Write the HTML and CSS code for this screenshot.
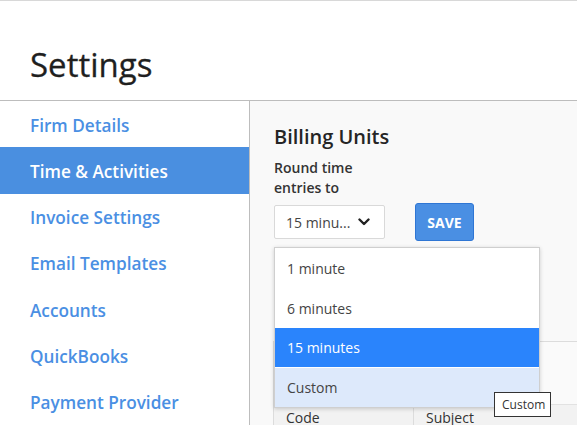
FILE: index.html
```html
<!DOCTYPE html>
<html lang="en">
<head>
<meta charset="utf-8">
<title>Settings</title>
<link rel="stylesheet" href="styles.css">
</head>
<body>
  <header class="page-header">
    <h1 class="page-title">Settings</h1>
  </header>
  <div class="layout">
    <nav class="sidebar">
      <a class="nav-item" href="#">Firm Details</a>
      <a class="nav-item is-active" href="#">Time &amp; Activities</a>
      <a class="nav-item" href="#">Invoice Settings</a>
      <a class="nav-item" href="#">Email Templates</a>
      <a class="nav-item" href="#">Accounts</a>
      <a class="nav-item" href="#">QuickBooks</a>
      <a class="nav-item" href="#">Payment Provider</a>
    </nav>
    <main class="content">
      <section class="billing">
        <h2 class="section-title">Billing Units</h2>
        <label class="field-label">Round time<br>entries to</label>
        <div class="field-row">
          <div class="select-wrap">
            <div class="select">
              <span class="select-value">15 minu...</span>
              <svg class="chevron" width="12" height="8" viewBox="0 0 12 8"><path d="M1.5 1.5 L6 6 L10.5 1.5" fill="none" stroke="#222" stroke-width="2.4" stroke-linecap="round" stroke-linejoin="round"/></svg>
            </div>
            <ul class="menu">
              <li class="menu-item">1 minute</li>
              <li class="menu-item">6 minutes</li>
              <li class="menu-item is-selected">15 minutes</li>
              <li class="menu-item is-hover">Custom</li>
            </ul>
          </div>
          <button class="btn-save" type="button">SAVE</button>
        </div>
      </section>
      <section class="table-card">
        <div class="table-head">
          <div class="th th-code">Code</div>
          <div class="th th-subject">Subject</div>
        </div>
      </section>
      <div class="tooltip">Custom</div>
    </main>
  </div>
</body>
</html>
```
FILE: styles.css
```css
* { box-sizing: border-box; }

html, body {
  margin: 0;
  padding: 0;
  height: 100%;
  overflow: hidden;
}

body {
  font-family: "Segoe UI", "Open Sans", sans-serif;
  color: #252525;
  background: #fff;
  border-top: 1px solid #d8d8d8;
}

.page-header {
  height: 99px;
  padding: 41px 30px 0;
}

.page-title {
  margin: 0;
  font-size: 33px;
  font-weight: 400;
  line-height: 46px;
  color: #1f1f1f;
  -webkit-text-stroke: 0.3px #1f1f1f;
}

.layout {
  display: flex;
  border-top: 1px solid #bdbdbd;
  height: calc(100% - 99px);
}

.sidebar {
  width: 250px;
  flex: none;
  border-right: 1px solid #bdbdbd;
  display: flex;
  flex-direction: column;
}

.nav-item {
  display: flex;
  align-items: center;
  height: 46.5px;
  padding: 2px 0 0 30px;
  font-size: 17.2px;
  font-weight: 600;
  color: #4a8fe3;
  text-decoration: none;
}

.nav-item.is-active {
  background: #4a8fe0;
  color: #fff;
}

.content {
  position: relative;
  flex: 1;
  background: #f9f9f9;
  padding: 22px 0 0 24px;
}

.section-title {
  margin: 0;
  font-size: 20px;
  font-weight: 600;
  line-height: 28px;
  color: #252525;
}

.field-label {
  display: block;
  margin-top: 7px;
  font-size: 14px;
  font-weight: 600;
  line-height: 20px;
  color: #333;
}

.field-row {
  display: flex;
  align-items: center;
  gap: 30px;
  margin-top: 5px;
}

.select-wrap {
  position: relative;
}

.select {
  width: 111px;
  height: 34px;
  display: flex;
  align-items: center;
  justify-content: space-between;
  padding: 0 14px 0 11px;
  background: #fff;
  border: 1px solid #d9d9d9;
  border-radius: 2px;
  font-size: 14px;
  color: #444;
}

.chevron { display: block; }

.menu {
  position: absolute;
  top: 42px;
  left: 0;
  z-index: 2;
  width: 266px;
  margin: 0;
  padding: 1px 0 0;
  list-style: none;
  background: #fff;
  border: 1px solid #cfcfcf;
  box-shadow: 0 1px 4px rgba(0, 0, 0, 0.18);
}

.menu-item {
  height: 39.5px;
  display: flex;
  align-items: center;
  padding-left: 12px;
  font-size: 14px;
  color: #444;
}

.menu-item.is-selected {
  background: #2a84fc;
  color: #fff;
  border-bottom: 1px solid #fff;
}

.menu-item.is-hover {
  background: #dde9fb;
}

.btn-save {
  width: 59px;
  height: 38px;
  padding: 0;
  background: #4a8fe3;
  border: 1px solid #2f76d4;
  border-radius: 3px;
  font-family: inherit;
  font-size: 14px;
  font-weight: 700;
  color: #fff;
}

.table-card {
  margin-top: 100px;
  margin-left: -1px;
  border-top: 1px solid #dcdcdc;
  border-left: 1px solid #dcdcdc;
  background: #fafafa;
  padding-top: 62px;
}

.table-head {
  display: flex;
  background: #f2f2f2;
  border-top: 1px solid #e2e2e2;
  height: 30px;
}

.th {
  padding: 3px 0 0 12px;
  font-size: 14px;
  color: #333;
}

.th-code {
  width: 140px;
  border-right: 1px solid #dcdcdc;
}

.tooltip {
  position: absolute;
  top: 291px;
  left: 244px;
  z-index: 3;
  width: 57px;
  height: 25px;
  padding: 3px 0 0 7px;
  background: #fff;
  border: 1px solid #333;
  font-size: 12px;
  color: #333;
}
```
